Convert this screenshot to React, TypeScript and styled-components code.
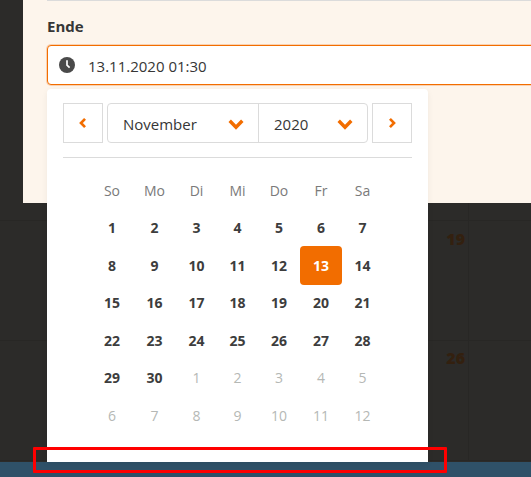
import React from "react";
import styled, { createGlobalStyle } from "styled-components";

const Global = createGlobalStyle`
  html, body { margin: 0; padding: 0; background: #2c2b29; }
  * { box-sizing: border-box; }
`;

const Page = styled.div`
  position: relative;
  width: 531px;
  height: 477px;
  overflow: hidden;
  background: #2c2b29;
  font-family: "Open Sans", "Noto Sans", sans-serif;
  color: #363636;
  display: flex;
  flex-direction: column;
`;

const Modal = styled.div`
  margin-left: 23px;
  height: 203px;
  padding: 1px 0 0 24px;
  background: #fdf5ec;
  flex: none;
`;

const TopEdge = styled.div`
  height: 1px;
  margin-top: -1px;
  background: #dbdbdb;
`;

const Label = styled.div`
  margin-top: 15px;
  font-size: 15px;
  line-height: 20px;
  font-weight: 700;
  color: #363636;
`;

const DateInput = styled.div`
  margin-top: 9px;
  height: 40px;
  margin-right: -4px;
  display: flex;
  align-items: center;
  gap: 13px;
  padding-left: 11px;
  background: #fff;
  border: 1px solid #f26d00;
  border-radius: 4px;
  box-shadow: 0 0 0 1px rgba(242, 109, 0, 0.25);
  font-size: 15px;
`;

const InputText = styled.span`
  padding-top: 2px;
`;

const Board = styled.div`
  flex: 1;
  display: flex;
  flex-direction: column;
`;

const BoardRow = styled.div<{ $h: number }>`
  height: ${(p) => p.$h}px;
  flex: none;
  border-bottom: 1px solid #282725;
  display: flex;
  justify-content: flex-end;
`;

const BoardCell = styled.div`
  width: 63px;
  border-left: 1px solid #282725;
  position: relative;
`;

const BoardDay = styled.span<{ $top: number }>`
  position: absolute;
  right: calc(100% + 4px);
  top: ${(p) => p.$top}px;
  font-size: 16px;
  line-height: 20px;
  font-weight: 800;
  color: #33200f;
`;

const TaskBar = styled.div`
  height: 15px;
  flex: none;
  background: #2f5168;
`;

const Popup = styled.div`
  position: absolute;
  left: 47px;
  top: 89px;
  width: 381px;
  height: 373px;
  padding: 14px 16px 0;
  background: #fff;
  border-radius: 4px 4px 0 0;
  box-shadow: 0 2px 6px rgba(10, 10, 10, 0.06);
`;

const Header = styled.div`
  display: flex;
  gap: 4px;
  height: 40px;
`;

const NavButton = styled.div`
  width: 40px;
  height: 40px;
  flex: none;
  display: flex;
  align-items: center;
  justify-content: center;
  border: 1px solid #dbdbdb;
`;

const SelectGroup = styled.div`
  flex: 1;
  display: flex;
  height: 40px;
  border: 1px solid #dbdbdb;
  border-radius: 4px;
`;

const SelectBox = styled.div<{ $w: number }>`
  width: ${(p) => p.$w}px;
  flex: none;
  display: flex;
  align-items: center;
  justify-content: space-between;
  padding: 2px 13px 0 15px;
  font-size: 15px;
  & + & {
    border-left: 1px solid #dbdbdb;
  }
`;

const Divider = styled.div`
  height: 1px;
  margin-top: 14px;
  background: #dbdbdb;
`;

const Grid = styled.div`
  margin: 13.4px 0 0 28px;
  display: grid;
  grid-template-columns: 42px 43px 41px 41px 42px 42px 41px;
  grid-auto-rows: 37.5px;
  align-items: center;
  justify-items: center;
`;

const Weekday = styled.div`
  padding-top: 2px;
  font-size: 14px;
  line-height: 38px;
  color: #7a7a7a;
`;

const Day = styled.div<{ $muted?: boolean; $selected?: boolean }>`
  width: 42px;
  height: 39px;
  display: flex;
  align-items: center;
  justify-content: center;
  border-radius: 4px;
  font-size: 14px;
  font-weight: ${(p) => (p.$muted ? 400 : 700)};
  color: ${(p) => (p.$selected ? "#fff" : p.$muted ? "#b5b8b5" : "#3d3d3d")};
  background: ${(p) => (p.$selected ? "#f26d00" : "transparent")};
`;

const Annotation = styled.div`
  position: absolute;
  left: 33px;
  top: 447px;
  width: 414px;
  height: 26px;
  border: 3px solid #ff0000;
  border-radius: 1px;
`;

const Clock = () => (
  <svg width="16" height="16" viewBox="0 0 16 16" aria-hidden="true">
    <circle cx="8" cy="8" r="8" fill="#4a4a4a" />
    <path d="M8 3.2V8.2L10.6 10.6" fill="none" stroke="#fff" strokeWidth="1.7" />
  </svg>
);

const Chevron = ({ dir, size }: { dir: "left" | "right" | "down"; size: number }) => {
  const d =
    dir === "left"
      ? "M6.7 1.5 3.3 5 6.7 8.5"
      : dir === "right"
        ? "M3.3 1.5 6.7 5 3.3 8.5"
        : "M1.5 3.2 5 6.8 8.5 3.2";
  return (
    <svg width={size} height={size} viewBox="0 0 10 10" aria-hidden="true">
      <path d={d} fill="none" stroke="#f26d00" strokeWidth={dir === "down" ? 1.9 : 2.2} />
    </svg>
  );
};

const weekdays = ["So", "Mo", "Di", "Mi", "Do", "Fr", "Sa"];
const days = [
  ...Array.from({ length: 30 }, (_, i) => ({ n: i + 1, muted: false })),
  ...Array.from({ length: 12 }, (_, i) => ({ n: i + 1, muted: true })),
];

export default function App() {
  return (
    <Page>
      <Global />
      <Modal>
        <TopEdge />
        <Label>Ende</Label>
        <DateInput>
          <Clock />
          <InputText>13.11.2020 01:30</InputText>
        </DateInput>
      </Modal>
      <Board>
        <BoardRow $h={18}>
          <BoardCell />
        </BoardRow>
        <BoardRow $h={120}>
          <BoardCell>
            <BoardDay $top={8}>19</BoardDay>
          </BoardCell>
        </BoardRow>
        <BoardRow $h={120}>
          <BoardCell>
            <BoardDay $top={7}>26</BoardDay>
          </BoardCell>
        </BoardRow>
      </Board>
      <TaskBar />
      <Popup>
        <Header>
          <NavButton>
            <Chevron dir="left" size={12} />
          </NavButton>
          <SelectGroup>
            <SelectBox $w={150}>
              November <Chevron dir="down" size={18} />
            </SelectBox>
            <SelectBox $w={109}>
              2020 <Chevron dir="down" size={18} />
            </SelectBox>
          </SelectGroup>
          <NavButton>
            <Chevron dir="right" size={12} />
          </NavButton>
        </Header>
        <Divider />
        <Grid>
          {weekdays.map((w) => (
            <Weekday key={w}>{w}</Weekday>
          ))}
          {days.map((d, i) => (
            <Day key={i} $muted={d.muted} $selected={!d.muted && d.n === 13}>
              {d.n}
            </Day>
          ))}
        </Grid>
      </Popup>
      <Annotation />
    </Page>
  );
}
